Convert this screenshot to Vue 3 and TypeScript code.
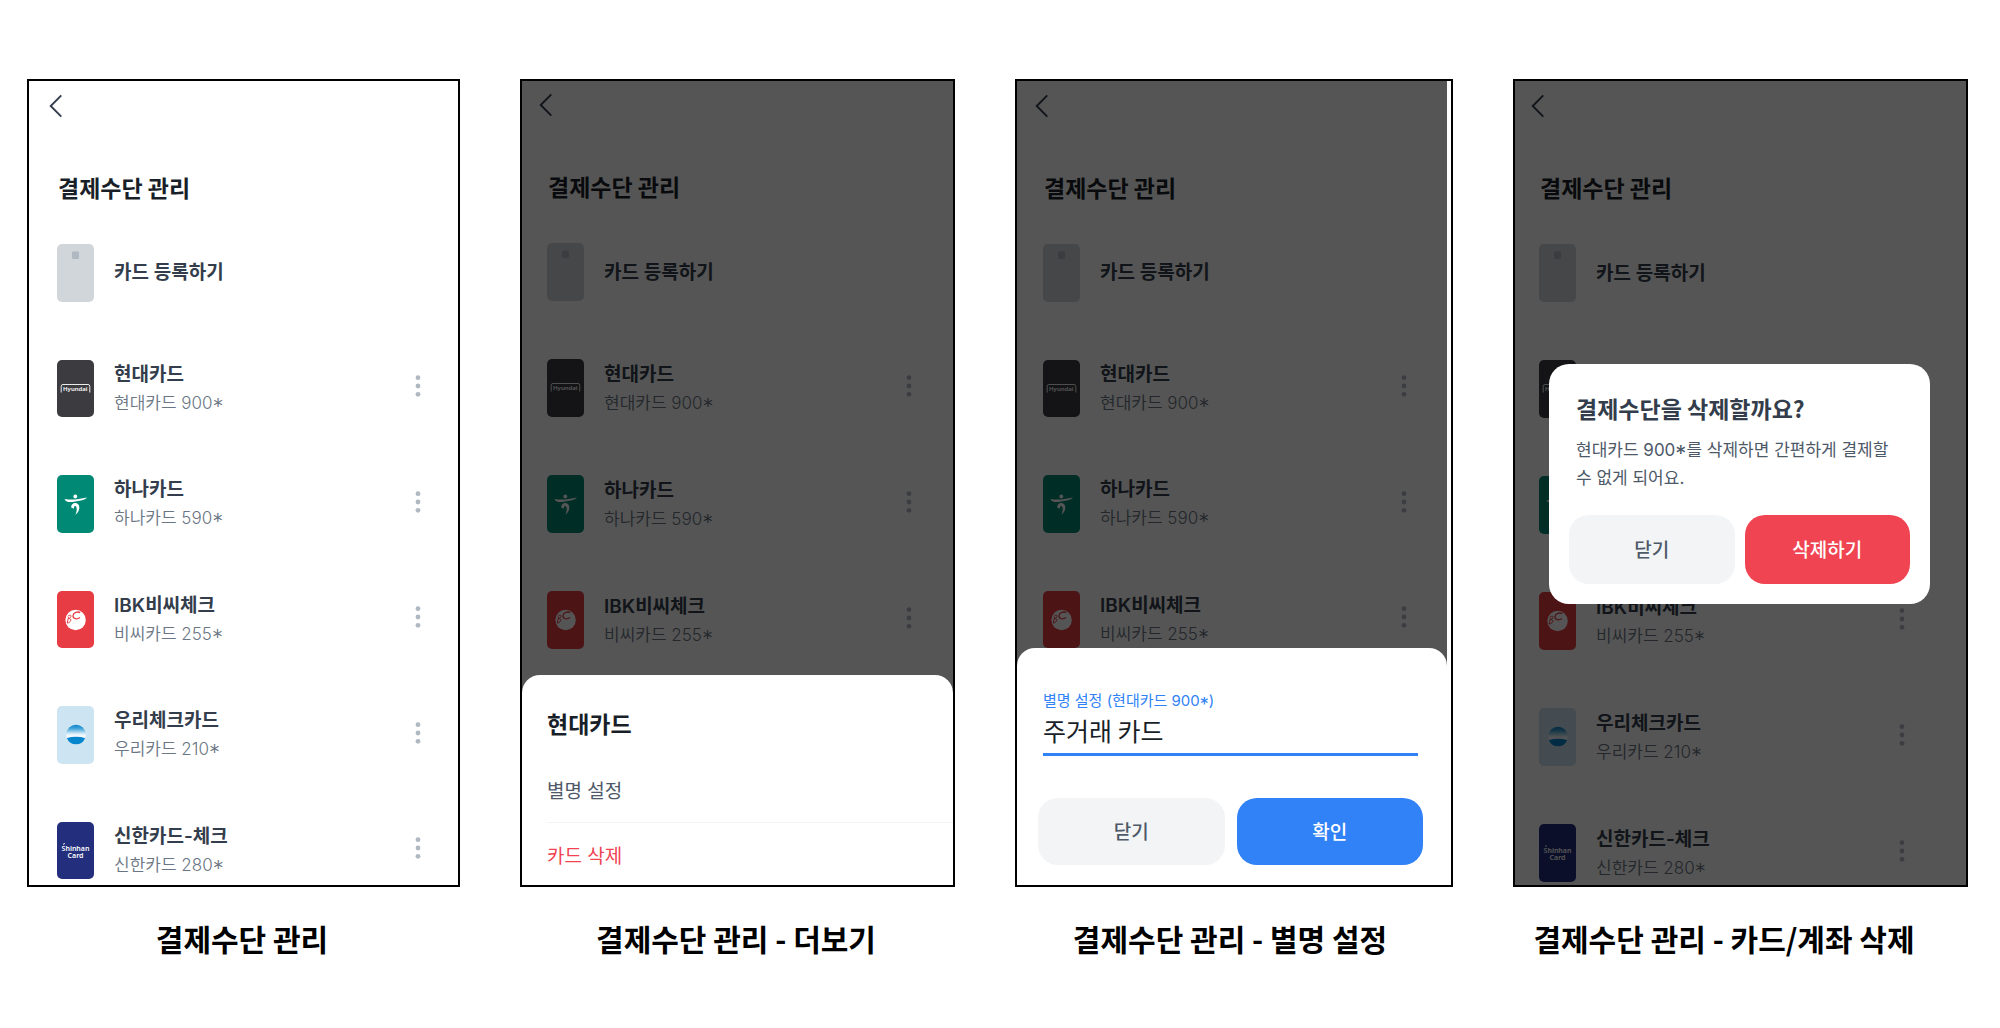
<script setup lang="ts">
import { ref } from 'vue'

type Brand = 'hyundai' | 'hana' | 'bc' | 'woori' | 'shinhan'
type Kind = 'list' | 'more' | 'alias' | 'remove'

interface PayCard {
  brand: Brand
  name: string
  issuer: string
  digits: string
}

interface Screen {
  kind: Kind
  caption: string
  cards: PayCard[]
}

const cards: PayCard[] = [
  { brand: 'hyundai', name: '현대카드', issuer: '현대카드', digits: '900' },
  { brand: 'hana', name: '하나카드', issuer: '하나카드', digits: '590' },
  { brand: 'bc', name: 'IBK비씨체크', issuer: '비씨카드', digits: '255' },
  { brand: 'woori', name: '우리체크카드', issuer: '우리카드', digits: '210' },
  { brand: 'shinhan', name: '신한카드-체크', issuer: '신한카드', digits: '280' },
]

const screens: Screen[] = [
  { kind: 'list', caption: '결제수단 관리', cards },
  { kind: 'more', caption: '결제수단 관리 - 더보기', cards: cards.slice(0, 3) },
  { kind: 'alias', caption: '결제수단 관리 - 별명 설정', cards: cards.slice(0, 3) },
  { kind: 'remove', caption: '결제수단 관리 - 카드/계좌 삭제', cards },
]

const alias = ref('주거래 카드')
</script>

<template>
  <main class="board">
    <div class="screens">
      <section
        v-for="screen in screens"
        :key="screen.kind"
        class="screen"
        :class="`screen-${screen.kind}`"
        :aria-label="screen.caption"
      >
        <header class="topbar">
          <button class="back" type="button" aria-label="뒤로">
            <svg width="14" height="24" viewBox="0 0 14 24" fill="none" stroke="currentColor" stroke-width="1.9">
              <path d="M12.3 1.3 1.7 12l10.6 10.7" />
            </svg>
          </button>
        </header>

        <h2 class="title">결제수단 관리</h2>

        <ul class="list">
          <li class="row">
            <span class="thumb thumb-empty">
              <svg width="37" height="57" viewBox="0 0 37 57">
                <rect x="15" y="7.5" width="7" height="7.5" rx="1" fill="#b0b8c1" />
              </svg>
            </span>
            <a class="name link" href="#">카드 등록하기</a>
          </li>

          <li v-for="card in screen.cards" :key="card.brand" class="row">
            <span class="thumb" :class="`thumb-${card.brand}`">
              <svg width="37" height="57" viewBox="0 0 37 57">
                <template v-if="card.brand === 'hyundai'">
                  <path d="M4.2 32.5v-6.2q0-1.8 1.8-1.8h25q1.8 0 1.8 1.8v6.2" fill="none" stroke="#fff" stroke-width="0.9" />
                  <text x="18.3" y="31" class="mark mark-hyundai">Hyundai</text>
                </template>
                <g v-else-if="card.brand === 'hana'" fill="#fff">
                  <circle cx="18.3" cy="21.5" r="1.9" />
                  <path d="M7.6 23.9c3.2.6 7 .9 11 .5 4-.3 8-1.4 11.3-1.8-.7 1.5-3.3 2.4-6 3-3.8.8-7.6 1.5-10.7 1.5-2.9-.1-5.3-1.5-5.6-3.2z" />
                  <path d="M14.2 32.6c-.4-2.5 1.8-4.8 4.4-4.5 2.700.3 4 2.6 3.700 5.200-.3 2.800-1.900 5.300-3.900 6.500 1-2.200 1.500-4.400 1.300-6.400-.2-1.600-.7-2.500-1.500-2.500-1.100 0-1.500 1.200-1.200 2.800z" />
                </g>
                <template v-else-if="card.brand === 'bc'">
                  <circle cx="18.6" cy="29" r="10.2" fill="#fff" />
                  <path
                    d="M23.2 21.6c-2.4-1.3-7-.2-7.200 3.200-.2 3.200 4 3.900 7 1.700"
                    fill="none"
                    stroke="#e83c44"
                    stroke-width="1.3"
                  />
                  <path
                    d="M10.600 25.600c1.300-1.700 3.600-1.800 3.500-.4-.1 1.200-1.400 2-2.400 2.400 1.700-.2 2.500.6 2 2-.6 1.600-2.200 2.500-3.500 2.400l1.400-5.800"
                    fill="none"
                    stroke="#e83c44"
                    stroke-width="1"
                  />
                </template>
                <template v-else-if="card.brand === 'woori'">
                  <defs>
                    <linearGradient :id="`sky-${screen.kind}`" x1="0" y1="0" x2="0" y2="1">
                      <stop offset="0" stop-color="#0c84cc" />
                      <stop offset="0.18" stop-color="#3b9fd8" />
                      <stop offset="0.5" stop-color="#e6f3fb" />
                      <stop offset="0.65" stop-color="#fff" />
                    </linearGradient>
                  </defs>
                  <circle cx="19" cy="28.4" r="9.7" :fill="`url(#sky-${screen.kind})`" />
                  <path d="M9.9 32c5.6-1.6 12.6-1.6 18.2 0a9.700 9.700 0 0 1-18.200 0z" fill="#0585cb" />
                </template>
                <template v-else>
                  <path d="M6 22.4l2-1" stroke="#fff" stroke-width="0.9" />
                  <text x="18.5" y="28.7" class="mark mark-shinhan">Shinhan</text>
                  <text x="18.5" y="35.7" class="mark mark-shinhan">Card</text>
                </template>
              </svg>
            </span>
            <div class="info">
              <strong class="name">{{ card.name }}</strong>
              <span class="sub">{{ card.issuer }} {{ card.digits }}<span class="star">*</span></span>
            </div>
            <button class="more" type="button" :aria-label="`${card.name} 더보기`">
              <svg width="6" height="22" viewBox="0 0 6 22" fill="#b0b8c1">
                <circle cx="3" cy="2.7" r="2.4" />
                <circle cx="3" cy="11" r="2.4" />
                <circle cx="3" cy="19.3" r="2.4" />
              </svg>
            </button>
          </li>
        </ul>

        <div v-if="screen.kind !== 'list'" class="scrim">
          <div v-if="screen.kind === 'more'" class="sheet">
            <h3 class="sheet-title">현대카드</h3>
            <button class="action" type="button">별명 설정</button>
            <button class="action action-danger" type="button">카드 삭제</button>
          </div>

          <form v-else-if="screen.kind === 'alias'" class="sheet alias" @submit.prevent>
            <div class="field">
              <label class="label" for="alias">별명 설정 (현대카드 900<span class="star">*</span>)</label>
              <input id="alias" v-model="alias" class="input" type="text" />
            </div>
            <div class="buttons">
              <button class="btn" type="button">닫기</button>
              <button class="btn btn-primary" type="submit">확인</button>
            </div>
          </form>

          <div v-else class="dialog" role="dialog" aria-labelledby="remove-title">
            <h3 id="remove-title" class="dialog-title">결제수단을 삭제할까요?</h3>
            <p class="dialog-text">
              현대카드 900<span class="star">*</span>를 삭제하면 간편하게 결제할 수 없게 되어요.
            </p>
            <div class="buttons">
              <button class="btn" type="button">닫기</button>
              <button class="btn btn-danger" type="button">삭제하기</button>
            </div>
          </div>
        </div>
      </section>
    </div>

    <div class="captions">
      <p v-for="screen in screens" :key="screen.kind" class="caption">{{ screen.caption }}</p>
    </div>
  </main>
</template>

<style>
body {
  margin: 0;
  background: #fff;
}
</style>

<style scoped>
.board {
  padding: 79px 0 32px;
  font-family: Inter, 'Noto Sans CJK KR', sans-serif;
  color: #333d4b;
}

.board *,
.board {
  box-sizing: border-box;
}

button {
  padding: 0;
  border: 0;
  background: none;
  color: inherit;
  font: inherit;
}

.screens {
  display: grid;
  grid-template-columns: 433fr 435fr 438fr 455fr;
  gap: 60px;
  padding: 0 32px 0 27px;
}

.screen {
  position: relative;
  display: flex;
  flex-direction: column;
  min-height: 808px;
  border: 2px solid #000;
  overflow: hidden;
}

.screen-list {
  padding: 1px 30px 6px 28px;
}

.screen-more {
  padding: 0 34px 4px 25px;
}

.screen-alias {
  padding: 1px 37px 6px 26px;
}

.screen-remove {
  padding: 1px 54px 3px 24px;
}

.topbar {
  display: flex;
  align-items: center;
  height: 48px;
}

.back {
  display: flex;
  margin-left: -8px;
}

.title,
.sheet-title,
.dialog-title {
  margin: 0;
  font-family: 'Noto Sans CJK KR', sans-serif;
  font-size: 23px;
  font-weight: 600;
  line-height: 32px;
  color: #191f28;
}

.title {
  margin: 41px 0 41px 1px;
}

.list {
  flex: 1;
  display: grid;
  grid-template-rows: repeat(6, 1fr);
  row-gap: 58px;
  margin: 0;
  padding: 0;
  list-style: none;
}

.row {
  display: flex;
  align-items: center;
  gap: 20px;
  min-height: 57px;
}

.thumb {
  flex: none;
  align-self: stretch;
  display: flex;
  width: 37px;
  border-radius: 5px;
}

.thumb-empty {
  background: #d1d6db;
}

.thumb-hyundai {
  background: #3c3b40;
}

.thumb-hana {
  background: #008a75;
}

.thumb-bc {
  background: #e83c44;
}

.thumb-woori {
  background: #cde4f2;
}

.thumb-shinhan {
  background: #232f7d;
}

.mark {
  fill: #fff;
  font-family: 'Noto Sans', sans-serif;
  font-weight: 600;
  text-anchor: middle;
}

.mark-hyundai {
  font-size: 6px;
}

.mark-shinhan {
  font-size: 7px;
}

.info {
  flex: 1;
  display: flex;
  flex-direction: column;
}

.name {
  font-size: 19px;
  font-weight: 600;
  line-height: 29px;
}

.link {
  color: inherit;
  text-decoration: none;
}

.sub {
  font-size: 17px;
  font-weight: 350;
  line-height: 28px;
  color: #6b7684;
}

.star {
  display: inline-block;
  height: 16px;
  font-size: 22px;
  line-height: 22px;
  vertical-align: -5px;
}

.more {
  display: flex;
  justify-content: center;
  width: 20px;
  padding-bottom: 4px;
}

.scrim {
  position: absolute;
  inset: 0;
  display: flex;
  background: rgba(0, 0, 0, 0.667);
}

.screen-more .scrim {
  align-items: flex-end;
}

.screen-alias .scrim {
  right: 4px;
  align-items: flex-end;
}

.screen-remove .scrim {
  align-items: center;
  padding: 1px 36px 0 34px;
}

.sheet {
  flex: 1;
  padding: 32px 0 0 25px;
  border-radius: 18px 18px 0 0;
  background: #fff;
}

.sheet-title {
  margin: 0 0 18px;
}

.action {
  display: block;
  width: 100%;
  height: 62px;
  font-size: 19px;
  font-weight: 400;
  text-align: left;
  color: #4e5968;
}

.action:first-of-type {
  height: 66px;
  border-bottom: 1px solid #f2f4f6;
}

.action-danger {
  color: #f04452;
}

.alias {
  padding: 43px 24px 20px 21px;
}

.field {
  margin: 0 5px 42px;
}

.label {
  display: block;
  height: 19px;
  font-size: 15px;
  line-height: 20px;
  color: #3182f6;
}

.label .star {
  font-size: 18px;
}

.input {
  display: block;
  width: 100%;
  height: 46px;
  padding: 0 0 4px;
  border: 0;
  border-bottom: 3px solid #3182f6;
  outline: 0;
  font-family: 'Noto Sans CJK KR', sans-serif;
  font-size: 25px;
  color: #191f28;
}

.buttons {
  display: flex;
  gap: 12px;
}

.btn {
  flex: 1;
  height: 67px;
  padding-bottom: 2px;
  border-radius: 20px;
  background: #f2f4f6;
  font-size: 19px;
  font-weight: 500;
  color: #4e5968;
}

.btn-primary {
  background: #3182f6;
  color: #fff;
}

.btn-danger {
  background: #f04452;
  color: #fff;
}

.dialog {
  flex: 1;
  padding: 28px 20px 20px;
  border-radius: 20px;
  background: #fff;
}

.dialog-title {
  padding: 0 7px;
  color: #333d4b;
}

.dialog-text {
  margin: 12px 0 23px;
  padding: 0 7px;
  font-size: 17px;
  line-height: 28px;
  word-break: keep-all;
  color: #4e5968;
}

.dialog .buttons {
  gap: 10px;
}

.dialog .btn {
  height: 69px;
}

.captions {
  display: grid;
  grid-template-columns: repeat(4, 1fr);
  gap: 64px;
  padding: 0 61px 0 27px;
}

.caption {
  margin: 31px 0 0;
  font-family: 'Noto Sans CJK KR', sans-serif;
  font-size: 30px;
  font-weight: 700;
  line-height: 40px;
  text-align: center;
  white-space: nowrap;
  color: #000;
}
</style>
